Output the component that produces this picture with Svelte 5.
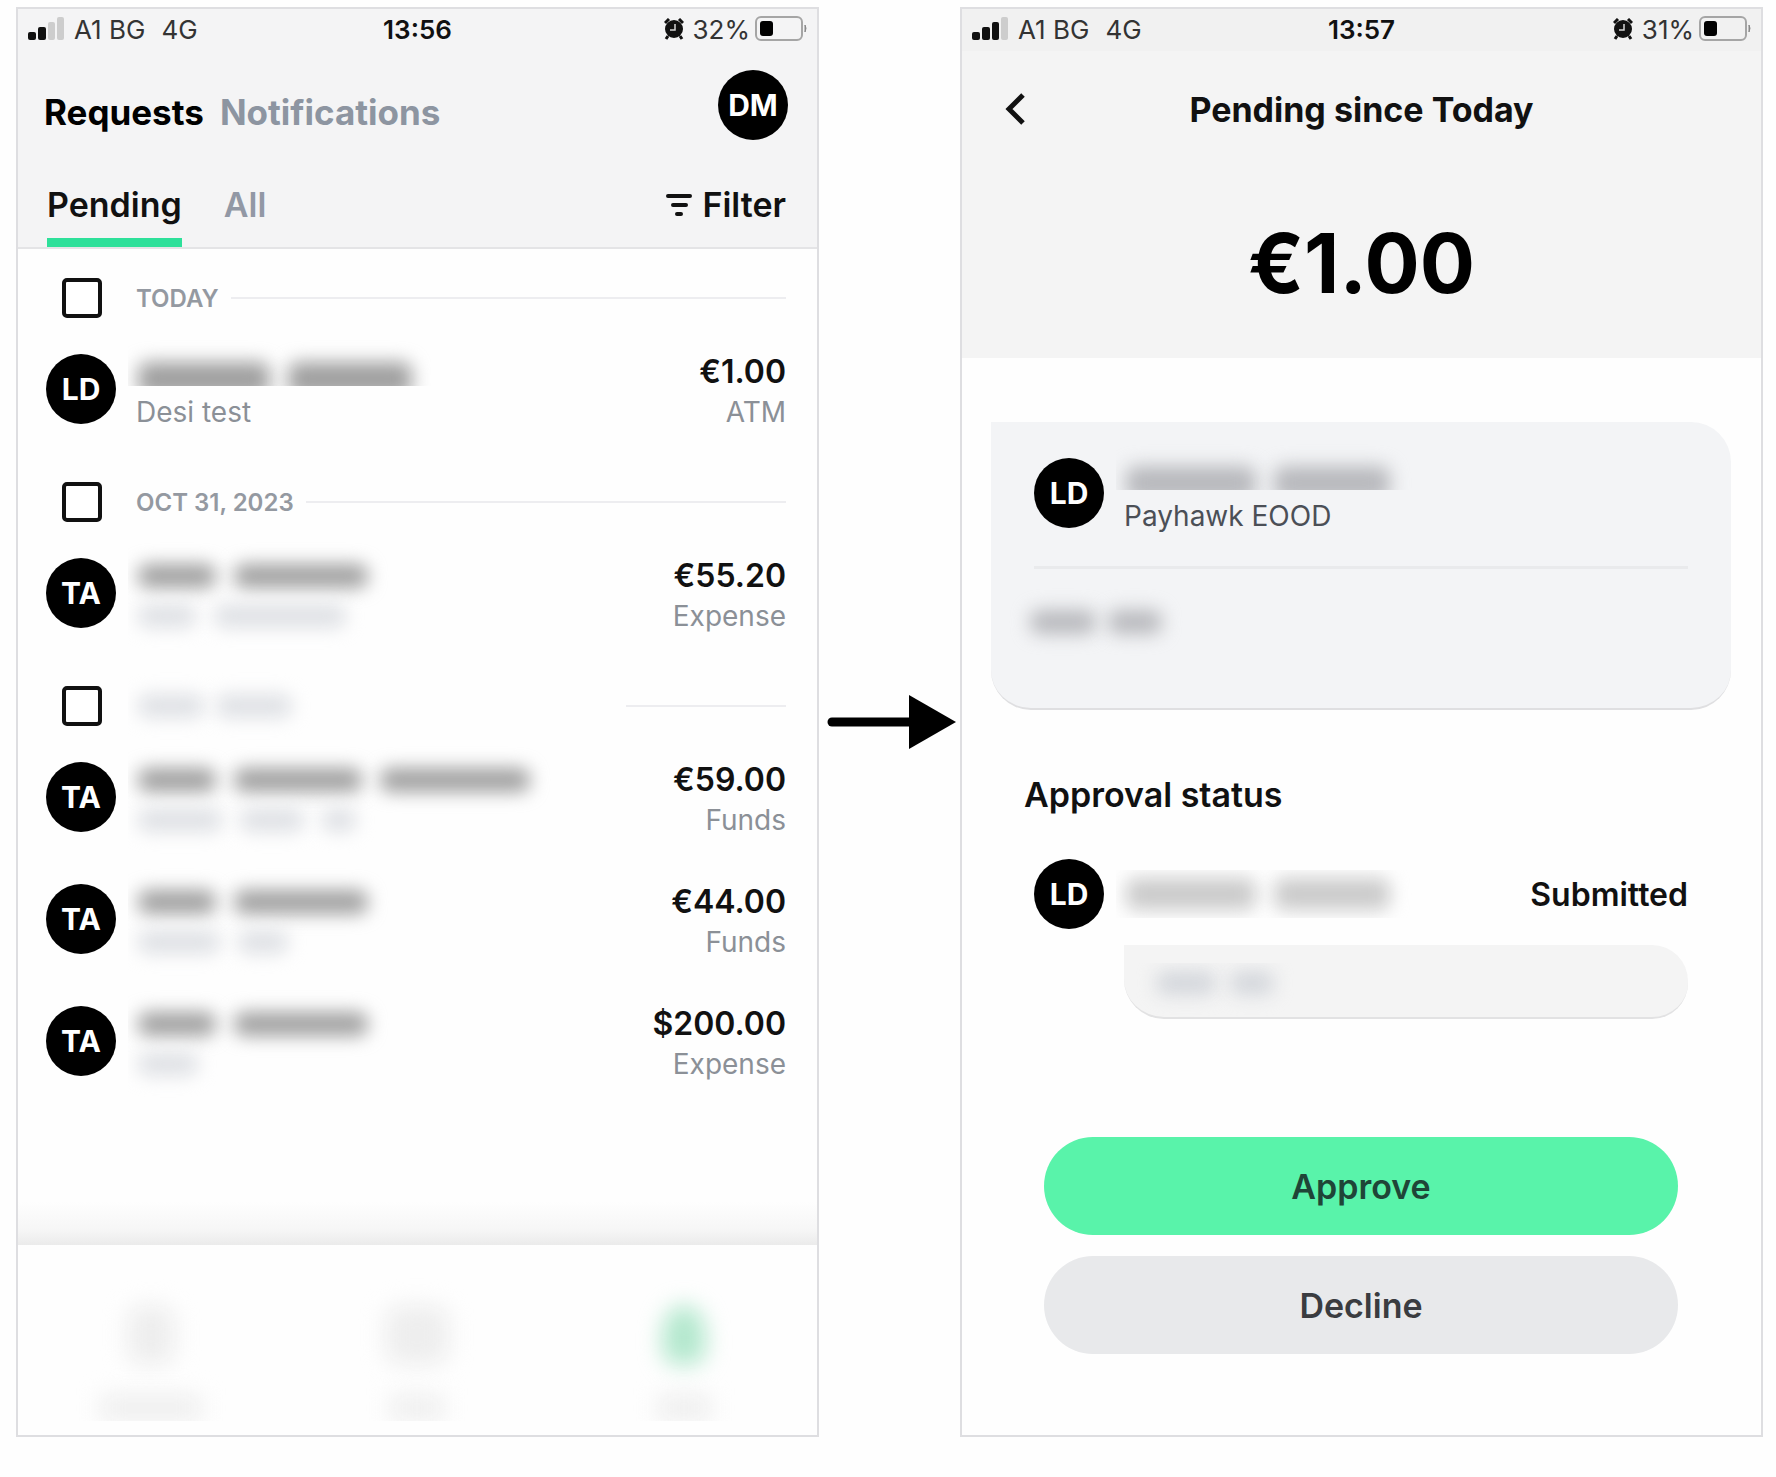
<script lang="ts">
  type Item = {
    initials: string;
    name: number[];
    note?: string;
    hiddenNote?: number[];
    amount: string;
    kind: string;
    cut?: boolean;
  };
  type Group = { date?: string; items: Item[] };

  // hidden texts are only stored as the widths of their words
  const groups: Group[] = [
    {
      date: "TODAY",
      items: [
        { initials: "LD", name: [132, 124], note: "Desi test", amount: "€1.00", kind: "ATM", cut: true },
      ],
    },
    {
      date: "OCT 31, 2023",
      items: [
        { initials: "TA", name: [78, 134], hiddenNote: [58, 132], amount: "€55.20", kind: "Expense" },
      ],
    },
    {
      items: [
        { initials: "TA", name: [78, 128, 150], hiddenNote: [84, 64, 34], amount: "€59.00", kind: "Funds" },
        { initials: "TA", name: [78, 134], hiddenNote: [82, 50], amount: "€44.00", kind: "Funds" },
        { initials: "TA", name: [78, 134], hiddenNote: [60], amount: "$200.00", kind: "Expense" },
      ],
    },
  ];
</script>

{#snippet smudge(words: number[], look: string)}
  <span class="smudge {look}">
    {#each words as width}
      <i style="width: {width}px"></i>
    {/each}
  </span>
{/snippet}

{#snippet statusBar(time: string, bars: number, battery: string)}
  <div class="status-bar">
    <div class="carrier">
      <svg width="38" height="24" viewBox="0 0 38 24">
        <rect x="0" y="15" width="8" height="8" rx="2" fill="#111" />
        <rect x="10" y="10" width="8" height="13" rx="2" fill="#111" />
        <rect x="20" y="5" width="7" height="18" rx="2" fill={bars > 2 ? "#111" : "#cdcdcd"} />
        <rect x="29" y="0" width="7" height="23" rx="2" fill="#cdcdcd" />
      </svg>
      <span>A1 BG</span>
      <span class="network">4G</span>
    </div>
    <strong>{time}</strong>
    <div class="power">
      <svg width="20" height="22" viewBox="0 0 20 22">
        <circle cx="10" cy="11" r="9" fill="#111" />
        <path d="M1 5 L5 1 M19 5 L15 1 M4 18 L2 21 M16 18 L18 21" stroke="#111" stroke-width="3" />
        <path d="M11 6 V12 H6" fill="none" stroke="#d8d8d8" stroke-width="1.5" />
      </svg>
      <span>{battery}</span>
      <svg width="52" height="26" viewBox="0 0 52 26">
        <rect x="1" y="1" width="46" height="23" rx="5" fill="none" stroke="#a5a5a5" stroke-width="2" />
        <rect x="5" y="5" width="13" height="15" rx="3" fill="#000" />
        <path d="M50 9 q2 3 0 7 z" fill="#888" stroke="#888" />
      </svg>
    </div>
  </div>
{/snippet}

<main>
  <section class="phone">
    <header class="list-header">
      {@render statusBar("13:56", 2, "32%")}
      <div class="title-row">
        <nav class="titles">
          <button class="active">Requests</button>
          <button>Notifications</button>
        </nav>
        <span class="avatar">DM</span>
      </div>
      <div class="tab-row">
        <button class="tab active">Pending</button>
        <button class="tab">All</button>
        <button class="filter">
          <svg width="26" height="24" viewBox="0 0 26 24">
            <path d="M2 3 H24 M7 12 H20 M11 21 H15" stroke="#111" stroke-width="4" stroke-linecap="round" />
          </svg>
          Filter
        </button>
      </div>
    </header>

    <div class="list">
      {#each groups as group}
        <section class="group">
          <div class="group-header">
            <input type="checkbox" aria-label="Select group" />
            {#if group.date}
              <h2>{group.date}</h2>
              <hr />
            {:else}
              {@render smudge([66, 76], "faint date")}
              <hr class="short" />
            {/if}
          </div>
          {#each group.items as item}
            <article class="item">
              <span class="avatar">{item.initials}</span>
              <div class="lines">
                {@render smudge(item.name, item.cut ? "cut" : "")}
                {#if item.note}
                  <span class="note">{item.note}</span>
                {:else if item.hiddenNote}
                  {@render smudge(item.hiddenNote, "faint")}
                {/if}
              </div>
              <div class="lines amount">
                <strong>{item.amount}</strong>
                <span>{item.kind}</span>
              </div>
            </article>
          {/each}
        </section>
      {/each}
    </div>

    <div class="fade"></div>
    <nav class="bottom-nav">
      <button aria-label="First section">
        <i class="icon narrow"></i>
        <i class="label wide"></i>
      </button>
      <button aria-label="Second section">
        <i class="icon"></i>
        <i class="label"></i>
      </button>
      <button aria-label="Current section">
        <i class="icon green"></i>
        <i class="label"></i>
      </button>
    </nav>
  </section>

  <svg class="arrow" width="130" height="56" viewBox="0 0 130 56">
    <path d="M5 28 H90" stroke="#000" stroke-width="9" stroke-linecap="round" />
    <path d="M82 1 L129 28 L82 55 Z" fill="#000" />
  </svg>

  <section class="phone">
    <header class="detail-header">
      {@render statusBar("13:57", 3, "31%")}
      <div class="detail-title">
        <button class="back" aria-label="Back">
          <svg width="24" height="36" viewBox="0 0 24 36">
            <path d="M21 4 L7 18 L21 32" fill="none" stroke="#111" stroke-width="5" />
          </svg>
        </button>
        <h1>Pending since Today</h1>
      </div>
      <p class="total">€1.00</p>
    </header>

    <div class="card">
      <div class="person">
        <span class="avatar">LD</span>
        <div class="lines">
          {@render smudge([130, 116], "cut soft")}
          <span class="company">Payhawk EOOD</span>
        </div>
      </div>
      <hr />
      {@render smudge([66, 54], "soft reason")}
    </div>

    <h2 class="status-title">Approval status</h2>
    <div class="approval">
      <div class="approver">
        <span class="avatar">LD</span>
        {@render smudge([130, 116], "boxed")}
        <strong>Submitted</strong>
      </div>
      <div class="bubble">
        {@render smudge([60, 44], "faint comment")}
      </div>
    </div>

    <div class="actions">
      <button class="approve">Approve</button>
      <button>Decline</button>
    </div>
  </section>
</main>

<style>
  :global(body) {
    margin: 0;
    background: #fefefe;
  }

  main {
    display: grid;
    grid-template-columns: 1fr 141px 1fr;
    padding: 7px 13px 40px 16px;
    font-family: Inter, "Liberation Sans", sans-serif;
    color: #111;
  }

  .phone {
    display: flex;
    flex-direction: column;
    min-width: 0;
    border: 2px solid #dedee1;
    background: #fefefe;
    overflow: hidden;
  }

  button {
    padding: 0;
    border: 0;
    background: none;
    font: inherit;
    color: inherit;
    cursor: pointer;
  }

  h1,
  h2,
  p,
  hr {
    margin: 0;
  }

  hr {
    border: 0;
    height: 2px;
    background: #ededf0;
  }

  .arrow {
    align-self: center;
    margin-left: 8px;
  }

  .status-bar {
    display: grid;
    grid-template-columns: 1fr auto 1fr;
    align-items: center;
    height: 40px;
    padding: 0 10px 2px;
    font-size: 26px;
    color: #333;
  }

  .status-bar strong {
    font-weight: 600;
    color: #111;
  }

  .carrier,
  .power {
    display: flex;
    align-items: center;
    gap: 8px;
  }

  .network {
    margin-left: 8px;
  }

  .power {
    justify-content: flex-end;
    gap: 5px;
  }

  .power span {
    margin-left: 4px;
  }

  .avatar {
    display: flex;
    flex: none;
    align-items: center;
    justify-content: center;
    width: 70px;
    height: 70px;
    border-radius: 50%;
    background: #000;
    color: #fff;
    font-size: 30px;
    font-weight: 700;
  }

  .list-header {
    background: #f4f4f5;
    border-bottom: 2px solid #e4e4e6;
  }

  .title-row {
    display: flex;
    justify-content: space-between;
    padding: 19px 29px 0 26px;
  }

  .titles {
    display: flex;
    gap: 16px;
    padding-top: 14px;
    font-size: 35px;
    font-weight: 700;
    color: #8d95a1;
  }

  .titles .active {
    color: #000;
  }

  .tab-row {
    display: flex;
    gap: 42px;
    padding: 0 31px 0 29px;
    font-size: 34px;
    font-weight: 600;
    line-height: 40px;
  }

  .tab {
    padding: 45px 0 13px;
    border-bottom: 9px solid transparent;
    color: #9298a5;
  }

  .tab.active {
    border-color: #2ee09a;
    color: #111;
  }

  .filter {
    display: flex;
    align-items: center;
    gap: 10px;
    margin-left: auto;
    padding: 45px 0 22px;
  }

  .list {
    display: flex;
    flex-direction: column;
    gap: 22px;
    padding: 19px 31px 100px 28px;
  }

  .group-header {
    display: flex;
    align-items: center;
    height: 60px;
    padding-left: 16px;
  }

  input[type="checkbox"] {
    appearance: none;
    flex: none;
    width: 40px;
    height: 40px;
    margin: 0 34px 0 0;
    border: 4px solid #111;
    border-radius: 5px;
    background: #fff;
  }

  .group-header h2 {
    margin-right: 12px;
    font-size: 24px;
    font-weight: 600;
    color: #9499a1;
  }

  .group-header hr {
    flex: 1;
  }

  .group-header hr.short {
    flex: none;
    width: 160px;
    margin-left: auto;
  }

  .item,
  .person {
    display: flex;
    align-items: center;
    gap: 12px;
  }

  .item {
    height: 122px;
  }

  .lines {
    flex: 1;
    padding-top: 6px;
    font-size: 28px;
    line-height: 40px;
  }

  .lines > span,
  .lines > strong {
    display: block;
  }

  .note,
  .company {
    padding-left: 8px;
    color: #8b9097;
  }

  .company {
    color: #4b4f56;
  }

  .amount {
    flex: none;
    text-align: right;
    color: #8b9097;
  }

  .amount strong {
    font-size: 32px;
    font-weight: 600;
    color: #111;
  }

  .lines > .smudge,
  .smudge {
    display: flex;
    align-items: center;
    gap: 18px;
    height: 40px;
    padding-left: 10px;
    clip-path: inset(-20px -20px -20px 0);
  }

  .smudge i {
    height: 24px;
    border-radius: 10px;
    background: #a0a0a0;
    filter: blur(9px);
  }

  .smudge.faint i {
    background: #dfe1e5;
  }

  .smudge.soft i {
    background: #b8b9bd;
  }

  .smudge.date {
    margin-left: -8px;
    gap: 12px;
  }

  .lines > .smudge.cut {
    width: 293px;
    padding-top: 14px;
    height: 26px;
    clip-path: inset(-16px 0 6px 0);
  }

  .smudge.cut i {
    height: 34px;
  }

  .smudge.boxed {
    width: 293px;
    height: 48px;
    clip-path: inset(0);
  }

  .smudge.boxed i {
    height: 32px;
    background: #cbcbcb;
  }

  .smudge.reason {
    gap: 12px;
    margin: 33px 0 0 -4px;
    padding: 0;
    clip-path: none;
  }

  .smudge.comment {
    gap: 14px;
    padding: 0;
    clip-path: inset(0 -20px -20px -20px);
  }

  .smudge.comment i {
    background: #d4d7dc;
  }

  .fade {
    height: 43px;
    margin-top: auto;
    background: linear-gradient(to top, #ebebeb, #f6f6f6 35%, #fefefe);
  }

  .bottom-nav {
    display: grid;
    grid-template-columns: repeat(3, 1fr);
    padding-bottom: 14px;
  }

  .bottom-nav button {
    display: flex;
    flex-direction: column;
    align-items: center;
    gap: 30px;
    padding-top: 60px;
    clip-path: inset(0);
  }

  .bottom-nav i {
    width: 52px;
    background: #eeeeee;
    filter: blur(11px);
  }

  .bottom-nav .icon {
    width: 64px;
    height: 60px;
    border-radius: 16px;
  }

  .bottom-nav .icon.narrow {
    width: 48px;
  }

  .bottom-nav .icon.green {
    width: 44px;
    border-radius: 50% 50% 16px 16px;
    background: #b4e8ce;
  }

  .bottom-nav .label {
    height: 26px;
  }

  .bottom-nav .label.wide {
    width: 100px;
  }

  .detail-header {
    padding-bottom: 44px;
    background: #f4f4f4;
  }

  .detail-header .status-bar {
    background: #f1f1f1;
  }

  .detail-title {
    display: grid;
    grid-template-columns: 1fr auto 1fr;
    align-items: center;
    height: 80px;
    padding: 18px 40px 65px;
    box-sizing: content-box;
  }

  .back {
    display: flex;
    justify-self: start;
  }

  h1 {
    font-size: 34px;
    font-weight: 700;
  }

  .total {
    text-align: center;
    font-size: 82px;
    font-weight: 700;
    line-height: 100px;
    color: #000;
  }

  .card {
    margin: 64px 30px 0 29px;
    padding: 28px 43px 66px;
    border-bottom: 2px solid #dfdfe1;
    border-radius: 0 40px 40px 40px;
    background: #f3f4f6;
  }

  .card hr {
    height: 3px;
    margin-top: 30px;
    background: #e9eaec;
  }

  .status-title {
    margin: 65px 62px 0;
    font-size: 34px;
    font-weight: 600;
    line-height: 40px;
  }

  .approval {
    padding: 44px 73px 0 72px;
  }

  .approver {
    display: flex;
    align-items: center;
    gap: 12px;
    font-size: 32px;
  }

  .approver strong {
    margin-left: auto;
    font-weight: 600;
  }

  .bubble {
    margin: 16px 0 0 90px;
    padding: 18px 32px 14px;
    border-bottom: 2px solid #e2e2e3;
    border-radius: 0 36px 36px 40px;
    background: #f4f4f4;
  }

  .actions {
    display: flex;
    flex-direction: column;
    gap: 21px;
    padding: 118px 83px 80px 82px;
  }

  .actions button {
    height: 98px;
    border-radius: 49px;
    background: #e8e9eb;
    font-size: 34px;
    font-weight: 600;
    color: #3a3c40;
  }

  .actions .approve {
    background: #59f3aa;
    color: #1f4537;
  }
</style>
